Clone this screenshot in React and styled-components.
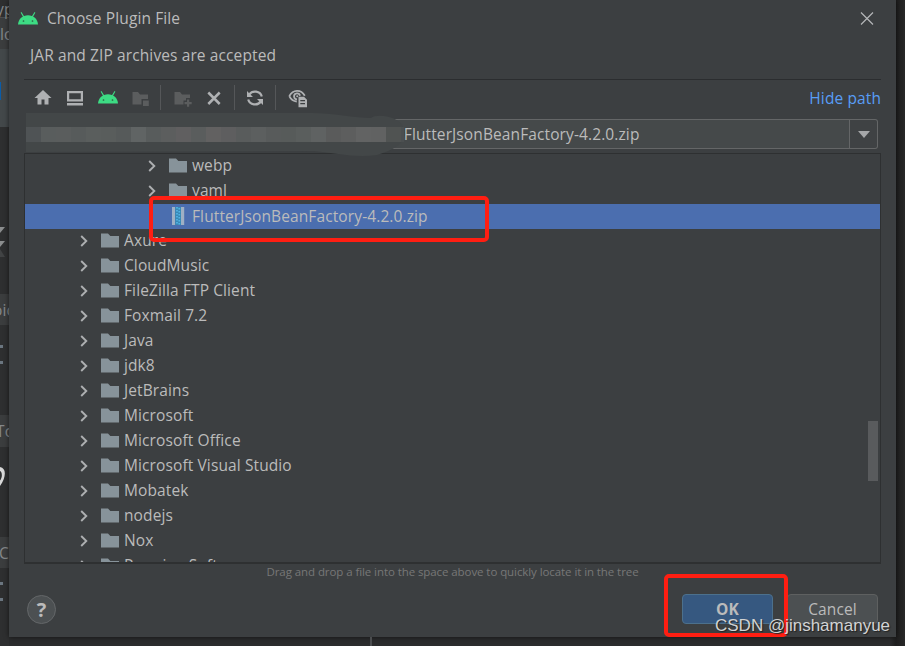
import React from 'react';
import styled, { createGlobalStyle } from 'styled-components';

const folders = [
  'Axure',
  'CloudMusic',
  'FileZilla FTP Client',
  'Foxmail 7.2',
  'Java',
  'jdk8',
  'JetBrains',
  'Microsoft',
  'Microsoft Office',
  'Microsoft Visual Studio',
  'Mobatek',
  'nodejs',
  'Nox',
  'Running Soft',
];

const mosaic = [
  '#4f5355', '#595d5d', '#5a5d5d', '#575b5b', '#5a5e5d', '#595d5c', '#565a5a',
  '#606464', '#585c5c', '#5c5e5e', '#605f60', '#5a5d5d', '#626161', '#5e5e5f',
  '#595c5c', '#5c5f5f', '#585b5b', '#575b5a', '#5a5e5d', '#5f6262', '#5a5b5b',
  '#5d5e5e', '#626363', '#616262', '#505352', '#4b4f50',
];

const AndroidIcon = () => (
  <svg width="20" height="13" viewBox="0 0 20 13">
    <path d="M3.300.7L5.600 4.600M16.700.7L14.400 4.600" stroke="#3ddc84" strokeWidth="1.100" strokeLinecap="round" />
    <path d="M0 12.500C.4 7 4.600 3.300 10 3.300S19.600 7 20 12.500Z" fill="#3ddc84" />
    <circle cx="5.500" cy="9" r=".85" fill="#2c5f42" />
    <circle cx="14.500" cy="9" r=".85" fill="#2c5f42" />
  </svg>
);

const HomeIcon = () => (
  <svg width="20" height="20" viewBox="0 0 20 20">
    <path d="M10 2L1.500 10H4.500V16.500H8.500V11.500H11.500V16.500H15.500V10H18.500Z" fill="#afb1b3" />
  </svg>
);

const DesktopIcon = () => (
  <svg width="20" height="20" viewBox="0 0 20 20">
    <path d="M2 3H18V13.500H2ZM4.200 5.200V11.300H15.800V5.200Z" fill="#afb1b3" fillRule="evenodd" />
    <path d="M2 15H18V17.500H2Z" fill="#afb1b3" />
  </svg>
);

const ModuleFolderIcon = () => (
  <svg width="20" height="20" viewBox="0 0 20 20">
    <path d="M1.500 4H7L9 6.500H17V11H10.500V16.500H1.500Z" fill="#5b5d5e" />
    <path d="M12 12.500H17.800V18H12Z" fill="#5b5d5e" />
  </svg>
);

const NewFolderIcon = () => (
  <svg width="20" height="20" viewBox="0 0 20 20">
    <path d="M1.500 4H7L9 6.500H17V10H13V12.500H10.500V16.500H1.500Z" fill="#5b5d5e" />
    <path d="M14 11.500H16.200V14H18.700V16.200H16.200V18.700H14V16.200H11.500V14H14Z" fill="#5b5d5e" />
  </svg>
);

const DeleteIcon = () => (
  <svg width="20" height="20" viewBox="0 0 20 20">
    <path d="M4.300 4.500L15.700 16M15.700 4.500L4.300 16" stroke="#afb1b3" strokeWidth="2.500" />
  </svg>
);

const RefreshIcon = () => (
  <svg width="20" height="20" viewBox="0 0 20 20">
    <path d="M16.800 8.500A7 6.500 0 0 0 4.200 6.500M3.200 11.500A7 6.500 0 0 0 15.800 13.500" fill="none" stroke="#afb1b3" strokeWidth="2.200" />
    <path d="M2 3V9H8ZM18 17V11H12Z" fill="#afb1b3" />
  </svg>
);

const EyeIcon = () => (
  <svg width="20" height="20" viewBox="0 0 20 20">
    <path d="M1.300 8.200C5 1.200 13 1.200 16.800 7.700M1.300 8.200C3 11.700 5.500 13.300 8.800 13.500" fill="none" stroke="#afb1b3" strokeWidth="1.800" />
    <path d="M9 11.300A3 3 0 1 1 12 7.700" fill="none" stroke="#afb1b3" strokeWidth="1.800" />
    <circle cx="9.200" cy="8.200" r="1" fill="#afb1b3" />
    <path d="M10.500 8.800H16L19 11.700V19.200H10.500ZM12.300 12V13.300H17V12ZM12.300 15V16.300H17V15Z" fill="#afb1b3" fillRule="evenodd" />
  </svg>
);

const CloseIcon = () => (
  <svg width="14" height="14" viewBox="0 0 14 14">
    <path d="M1 .5L13 12.500M13 .5L1 12.500" stroke="#b4b6b8" strokeWidth="1.200" />
  </svg>
);

const Chevron = () => (
  <svg width="8" height="12" viewBox="0 0 8 12">
    <path d="M1.200 1L6.300 6L1.200 11" fill="none" stroke="#adafb1" strokeWidth="1.900" />
  </svg>
);

const FolderIcon = () => (
  <svg width="18" height="15" viewBox="0 0 18 15">
    <path d="M0 .5H7L9.300 3H18V14.500H0Z" fill="#87939a" />
  </svg>
);

const ZipIcon = () => (
  <svg width="18" height="18" viewBox="0 0 18 18">
    <path d="M3 0H6.200V18H3ZM12 0H15.200V18H12Z" fill="#9fb0c4" />
    <path d="M6.200 0H12V18H6.200Z" fill="#3889b5" />
    <path d="M8 0V18M10.300 1V18" stroke="#52b4e6" strokeWidth="1.700" strokeDasharray="1.500 1.500" />
  </svg>
);

const TreeRow = ({ name, depth, zip }) => (
  <Row $depth={depth} $selected={zip}>
    <ChevronSlot>{!zip && <Chevron />}</ChevronSlot>
    <IconSlot>{zip ? <ZipIcon /> : <FolderIcon />}</IconSlot>
    <Label>{name}</Label>
  </Row>
);

export default function App() {
  return (
    <Desktop>
      <GlobalStyle />
      <LeftEdge>
        <EdgeBand $h={17} $shift={-4}>yp</EdgeBand>
        <EdgeBand $h={32} $bg="#3b3d3e" $line>lo</EdgeBand>
        <EdgeBand $h={78} $bg="#43484a"><BlueMark /></EdgeBand>
        <EdgeBand $h={167}>
          <ArrowMarks width="9" height="32" viewBox="0 0 9 32">
            <path d="M0 1H5L0 7ZM0 15H5L0 21Z" fill="#8b8d8e" />
            <path d="M0 23L5 31H0Z" fill="#414344" />
          </ArrowMarks>
        </EdgeBand>
        <EdgeBand $h={31} $bg="#3b3d3e" $shift={-7}>oic</EdgeBand>
        <EdgeBand $h={90}><Dashes /></EdgeBand>
        <EdgeBand $h={32} $bg="#3b3d3e" $shift={-4}>To</EdgeBand>
        <EdgeBand $h={90}>
          <PinMark width="9" height="22" viewBox="0 0 9 22">
            <path d="M0 1C6.500 2 6.500 11 0 20V14.500C2.500 12 2.500 6 0 5Z" fill="#d8d8d8" />
          </PinMark>
        </EdgeBand>
        <EdgeBand $h={31} $bg="#3b3d3e" $shift={-1}>C</EdgeBand>
        <EdgeBand $h={78}><Dashes /></EdgeBand>
      </LeftEdge>

      <Dialog>
        <TitleBar>
          <AndroidIcon />
          <Title>Choose Plugin File</Title>
          <CloseIcon />
        </TitleBar>
        <Description>JAR and ZIP archives are accepted</Description>

        <Toolbar>
          <Tool $gap={9}><HomeIcon /></Tool>
          <Tool $gap={12}><DesktopIcon /></Tool>
          <Tool $gap={13}><AndroidIcon /></Tool>
          <Tool $gap={13}><ModuleFolderIcon /></Tool>
          <Separator $gap={9} />
          <Tool $gap={12}><NewFolderIcon /></Tool>
          <Tool $gap={11}><DeleteIcon /></Tool>
          <Separator $gap={10} />
          <Tool $gap={10}><RefreshIcon /></Tool>
          <Separator $gap={10} />
          <Tool $gap={12}><EyeIcon /></Tool>
          <HidePath>Hide path</HidePath>
        </Toolbar>

        <PathField>
          <Smudge width="380" height="46" viewBox="0 0 380 46">
            <path
              d="M0 1H286C305 1 330 6 345 6C350 1 374 4 378 16C383 28 370 38 351 43C328 46 310 41 288 39L0 40Z"
              fill="#434748"
            />
          </Smudge>
          <Mosaic>
            {mosaic.map((color, i) => (
              <MosaicCell key={i} $color={color} />
            ))}
          </Mosaic>
          <PathText>/FlutterJsonBeanFactory-4.2.0.zip</PathText>
          <DropButton>
            <svg width="12" height="7" viewBox="0 0 12 7">
              <path d="M0 0H12L6 7Z" fill="#a5a7a9" />
            </svg>
          </DropButton>
        </PathField>

        <Tree>
          <TreeRow name="webp" depth={1} />
          <TreeRow name="yaml" depth={1} />
          <TreeRow name="FlutterJsonBeanFactory-4.2.0.zip" depth={1} zip />
          {folders.map((name) => (
            <TreeRow key={name} name={name} depth={0} />
          ))}
          <ScrollThumb />
        </Tree>

        <Hint>Drag and drop a file into the space above to quickly locate it in the tree</Hint>

        <Footer>
          <HelpButton>?</HelpButton>
          <Button $primary>OK</Button>
          <Button>Cancel</Button>
        </Footer>
      </Dialog>

      <BottomTick />
      <FileMarker />
      <OkMarker />
      <Watermark>CSDN @jinshamanyue</Watermark>
    </Desktop>
  );
}

// STYLES --------------------------------

const GlobalStyle = createGlobalStyle`
  * {
    box-sizing: border-box;
  }

  body {
    margin: 0;
    overflow: hidden;
    background: #292a2b;
  }

  svg {
    display: block;
    flex: none;
  }
`;

const Desktop = styled.div`
  position: relative;
  display: flex;
  align-items: flex-start;
  width: 905px;
  height: 646px;
  overflow: hidden;
  background: linear-gradient(90deg, #2b2c2d 0 890px, #1e1e1e 896px, #282828 905px);
  color: #bbbbbb;
  font-family: 'Open Sans', 'Noto Sans', sans-serif;
  font-size: 15.5px;
  letter-spacing: 0.11px;
  white-space: nowrap;
`;

const LeftEdge = styled.div`
  width: 9px;
  flex: none;
  overflow: hidden;
`;

const EdgeBand = styled.div`
  display: flex;
  align-items: center;
  height: ${({ $h }) => $h}px;
  background: ${({ $bg }) => $bg || '#2e2f30'};
  border-top: ${({ $line }) => ($line ? '1px solid #4b4d4e' : 'none')};
  color: #85888a;
  text-indent: ${({ $shift }) => $shift || 0}px;
`;

const ArrowMarks = styled.svg`
  margin-top: 63px;
`;

const PinMark = styled.svg`
  margin-bottom: 30px;
`;

const BlueMark = styled.div`
  width: 1px;
  height: 18px;
  margin-top: 6px;
  background: #0a5ca8;
`;

const Dashes = styled.div`
  width: 3px;
  height: 19px;
  margin-bottom: 32px;
  border: solid #6b7680;
  border-width: 3px 0;
`;

const Dialog = styled.div`
  position: relative;
  display: flex;
  flex-direction: column;
  width: 887px;
  height: 637px;
  padding: 0 15px;
  background: #3c3f41;
  box-shadow: 0 0 5px rgba(0, 0, 0, 0.6);
`;

const TitleBar = styled.div`
  display: flex;
  align-items: center;
  height: 37px;
  margin: 0 7px 0 -6px;
`;

const Title = styled.div`
  flex: 1;
  margin-left: 9px;
  padding-bottom: 2px;
`;

const Description = styled.div`
  height: 42px;
  padding-left: 6px;
  line-height: 36px;
`;

const Toolbar = styled.div`
  display: flex;
  align-items: center;
  height: 40px;
  flex: none;
  padding-bottom: 4px;
  border-top: 1px solid #2b2d2f;
`;

const Tool = styled.div`
  display: flex;
  align-items: center;
  width: 20px;
  height: 20px;
  margin-left: ${({ $gap }) => $gap}px;
`;

const Separator = styled.div`
  width: 1px;
  height: 25px;
  margin-left: ${({ $gap }) => $gap}px;
  background: #555759;
`;

const HidePath = styled.div`
  margin-left: auto;
  color: #589df6;
`;

const PathField = styled.div`
  position: relative;
  z-index: 1;
  display: flex;
  align-items: center;
  height: 30px;
  flex: none;
  margin: 0 3px 0 2px;
  background: #45494a;
  border: 1px solid #646667;
  border-left: none;
  border-radius: 0 3px 3px 0;
`;

const Smudge = styled.svg`
  position: absolute;
  left: 0;
  top: -8px;
`;

const Mosaic = styled.div`
  position: relative;
  display: flex;
  width: 378px;
  height: 15px;
  overflow: hidden;
`;

const MosaicCell = styled.div`
  width: 15px;
  flex: none;
  background: ${({ $color }) => $color};
`;

const PathText = styled.div`
  flex: 1;
  margin-left: -6px;
  padding-bottom: 1px;
`;

const DropButton = styled.div`
  display: flex;
  align-items: center;
  justify-content: center;
  width: 28px;
  height: 28px;
  border-left: 1px solid #646667;
  background: #3f4244;
  border-radius: 0 3px 3px 0;
`;

const Tree = styled.div`
  position: relative;
  height: 411px;
  flex: none;
  margin-top: 4px;
  overflow: hidden;
  border: 1px solid #2e3031;
  border-bottom-width: 2px;
`;

const Row = styled.div`
  display: flex;
  align-items: center;
  height: 25px;
  padding-left: ${({ $depth }) => 55 + $depth * 68}px;
  padding-bottom: ${({ $selected }) => ($selected ? 1 : 2)}px;
  background: ${({ $selected }) => ($selected ? '#4b6eaf' : 'transparent')};
`;

const ChevronSlot = styled.div`
  width: 21px;
`;

const IconSlot = styled.div`
  width: 18px;
`;

const Label = styled.div`
  margin-left: 5px;
  padding-bottom: 1px;
`;

const ScrollThumb = styled.div`
  position: absolute;
  right: 2px;
  top: 267px;
  width: 10px;
  height: 60px;
  background: #595b5d;
`;

const Hint = styled.div`
  height: 18px;
  margin-top: -1px;
  color: #777777;
  font-size: 11.5px;
  letter-spacing: -0.08px;
  line-height: 18px;
  text-align: center;
`;

const Footer = styled.div`
  display: flex;
  align-items: center;
  gap: 14px;
  height: 30px;
  margin: 13px 3px 0 2px;
`;

const HelpButton = styled.div`
  display: flex;
  align-items: center;
  justify-content: center;
  width: 29px;
  height: 29px;
  margin: 0 auto 0 1px;
  border: 1px solid #646769;
  border-radius: 50%;
  background: #4c5052;
  font-size: 20px;
  font-weight: 700;
`;

const Button = styled.div`
  display: flex;
  align-items: center;
  justify-content: center;
  width: 91px;
  height: 30px;
  border: 1px solid ${({ $primary }) => ($primary ? '#4c708c' : '#5e6060')};
  border-radius: 4px;
  background: ${({ $primary }) => ($primary ? '#365880' : '#4c5052')};
  font-weight: ${({ $primary }) => ($primary ? 700 : 400)};
`;

const BottomTick = styled.div`
  position: absolute;
  left: 370px;
  top: 637px;
  width: 2px;
  height: 9px;
  background: #4b4d4f;
`;

const Marker = styled.div`
  position: absolute;
  border: 4px solid #ff1e12;
  border-radius: 5px;
`;

const FileMarker = styled(Marker)`
  left: 148.5px;
  top: 195.5px;
  width: 340px;
  height: 46px;
`;

const OkMarker = styled(Marker)`
  left: 663.5px;
  top: 573.5px;
  width: 124px;
  height: 63px;
`;

const Watermark = styled.div`
  position: absolute;
  left: 715px;
  top: 616px;
  color: #d2d3d4;
  font-family: 'Liberation Sans', Arial, sans-serif;
  font-size: 17px;
  letter-spacing: 0;
  line-height: 20px;
  text-shadow: 1px 1px 1px #222222;
`;
